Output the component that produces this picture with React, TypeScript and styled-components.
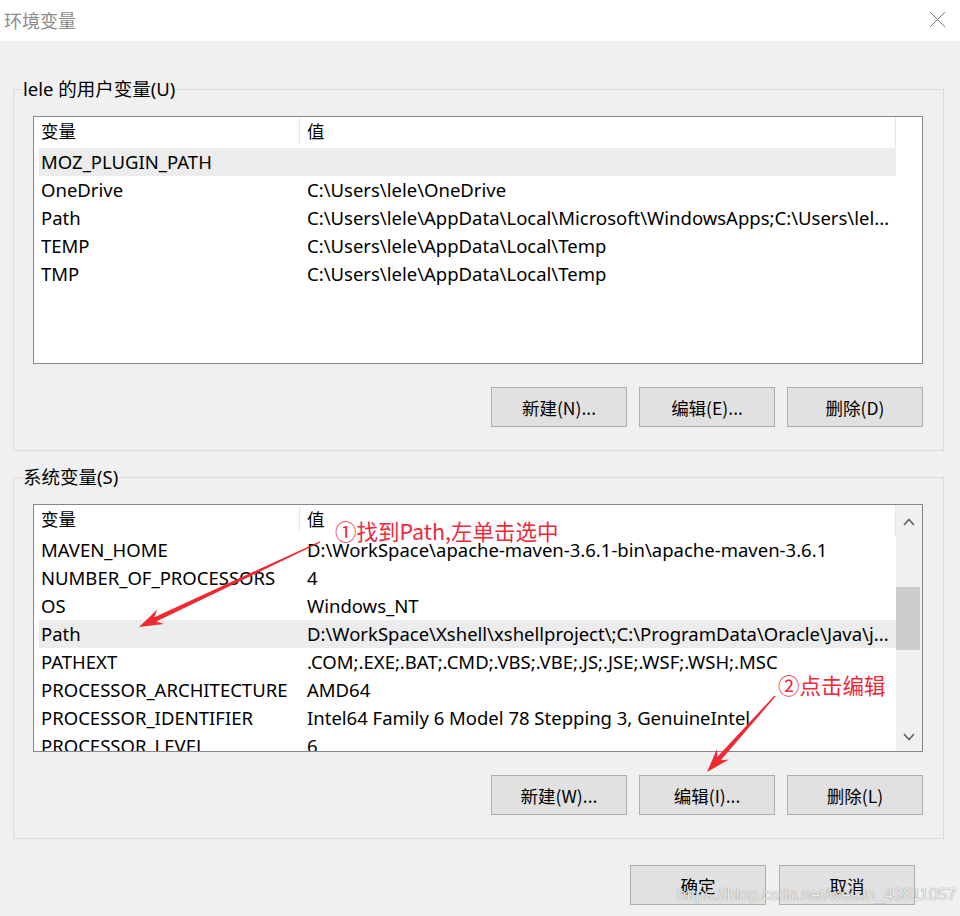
import React from "react";
import styled, { createGlobalStyle } from "styled-components";

const GlobalStyle = createGlobalStyle`
  html, body { margin: 0; padding: 0; background: #f0f0f0; }
  * { box-sizing: border-box; }
`;

const UI_FONT = `"Noto Sans", "Noto Sans CJK SC", sans-serif`;
const CJK_FONT = `"Noto Sans CJK SC", "Noto Sans", sans-serif`;

const Window = styled.div`
  position: relative;
  width: 960px;
  height: 916px;
  background: #f0f0f0;
  display: flex;
  flex-direction: column;
  overflow: hidden;
  font-family: ${UI_FONT};
  color: #000;
`;

const TitleBar = styled.div`
  height: 41px;
  flex: none;
  background: #fff;
  display: flex;
  align-items: center;
  justify-content: space-between;
  padding: 0 14px 2px 4px;
`;

const Title = styled.span`
  font-family: ${CJK_FONT};
  font-size: 18px;
  color: #8a8a8a;
`;

const CloseButton = styled.span`
  display: flex;
  width: 17px;
  height: 17px;
`;

const Body = styled.div`
  padding: 48px 16px 0 13px;
  display: flex;
  flex-direction: column;
  gap: 26px;
`;

const Group = styled.section`
  position: relative;
  border: 1px solid #dcdcdc;
  padding: 26px 19px 23px 19px;
  display: flex;
  flex-direction: column;
  gap: 23px;
`;

const Legend = styled.span`
  position: absolute;
  left: 8px;
  top: -13px;
  padding: 0 1px;
  background: #f0f0f0;
  font-size: 18.5px;
  line-height: 24px;
`;

const ListBox = styled.div`
  width: 890px;
  height: 248px;
  border: 1px solid #828790;
  background: #fff;
  display: flex;
  overflow: hidden;
`;

const ListContent = styled.div`
  width: 862px;
  margin-left: 5px;
  display: flex;
  flex-direction: column;
  overflow: hidden;
`;

const Spacer = styled.div`
  width: 26px;
  flex: none;
`;

const HeaderRow = styled.div`
  display: grid;
  grid-template-columns: 261px 1fr;
  height: 31px;
  flex: none;
  border-right: 1px solid #e5e5e5;
`;

const HeaderCell = styled.div<{ $first?: boolean }>`
  padding-left: ${(p) => (p.$first ? "2px" : "7px")};
  font-family: ${CJK_FONT};
  font-size: 17.5px;
  border-right: ${(p) => (p.$first ? "1px solid #e5e5e5" : "none")};
  margin: 1px 0 4px;
  line-height: 26px;
`;

const Row = styled.div<{ $selected?: boolean }>`
  display: grid;
  grid-template-columns: 261px 1fr;
  height: 28px;
  flex: none;
  background: ${(p) => (p.$selected ? "#ececec" : "transparent")};
  font-size: 18.5px;
  line-height: 28px;
  white-space: nowrap;
`;

const Cell = styled.div<{ $value?: boolean }>`
  padding-left: ${(p) => (p.$value ? "7px" : "2px")};
  overflow: hidden;
`;

const ScrollBar = styled.div`
  width: 26px;
  flex: none;
  background: #f0f0f0;
  display: flex;
  flex-direction: column;
`;

const ScrollArrow = styled.div<{ $h: number }>`
  height: ${(p) => p.$h}px;
  flex: none;
  display: flex;
  align-items: center;
  justify-content: center;
`;

const Track = styled.div`
  flex: 1;
`;

const Thumb = styled.div`
  margin-top: 49px;
  width: 24px;
  height: 63px;
  background: #cdcdcd;
`;

const ButtonRow = styled.div`
  display: flex;
  justify-content: flex-end;
  gap: 12px;
  padding-right: 1px;
`;

const Button = styled.button`
  width: 136px;
  height: 40px;
  background: #e1e1e1;
  border: 1px solid #adadad;
  border-radius: 0;
  font-family: ${CJK_FONT};
  font-size: 17.5px;
  color: #000;
  padding: 0;
  display: flex;
  align-items: center;
  justify-content: center;
`;

const Footer = styled.div`
  margin-top: 26px;
  display: flex;
  justify-content: flex-end;
  gap: 13px;
  padding-right: 45px;
`;

const Overlay = styled.svg`
  position: absolute;
  left: 0;
  top: 0;
  pointer-events: none;
`;

const Note = styled.span<{ $x: number; $y: number }>`
  position: absolute;
  left: ${(p) => p.$x}px;
  top: ${(p) => p.$y}px;
  font-family: ${CJK_FONT};
  font-size: 21.5px;
  line-height: 26px;
  color: #f0283a;
  white-space: nowrap;
`;

const Watermark = styled.span`
  position: absolute;
  left: 677px;
  top: 884px;
  font-family: "Liberation Sans", Arial, sans-serif;
  font-size: 16.5px;
  line-height: 20px;
  color: rgba(255, 255, 255, 0.85);
  text-shadow: 0 0 1px rgba(90, 90, 90, 0.55), 0 0 1px rgba(90, 90, 90, 0.4);
  white-space: nowrap;
`;

type Variable = { name: string; value: string; selected?: boolean };

const userVars: Variable[] = [
  { name: "MOZ_PLUGIN_PATH", value: "", selected: true },
  { name: "OneDrive", value: String.raw`C:\Users\lele\OneDrive` },
  { name: "Path", value: String.raw`C:\Users\lele\AppData\Local\Microsoft\WindowsApps;C:\Users\lel...` },
  { name: "TEMP", value: String.raw`C:\Users\lele\AppData\Local\Temp` },
  { name: "TMP", value: String.raw`C:\Users\lele\AppData\Local\Temp` },
];

const systemVars: Variable[] = [
  { name: "MAVEN_HOME", value: String.raw`D:\WorkSpace\apache-maven-3.6.1-bin\apache-maven-3.6.1` },
  { name: "NUMBER_OF_PROCESSORS", value: "4" },
  { name: "OS", value: "Windows_NT" },
  { name: "Path", value: String.raw`D:\WorkSpace\Xshell\xshellproject\;C:\ProgramData\Oracle\Java\j...`, selected: true },
  { name: "PATHEXT", value: ".COM;.EXE;.BAT;.CMD;.VBS;.VBE;.JS;.JSE;.WSF;.WSH;.MSC" },
  { name: "PROCESSOR_ARCHITECTURE", value: "AMD64" },
  { name: "PROCESSOR_IDENTIFIER", value: "Intel64 Family 6 Model 78 Stepping 3, GenuineIntel" },
  { name: "PROCESSOR_LEVEL", value: "6" },
];

function VarList({ rows, scroll }: { rows: Variable[]; scroll?: boolean }) {
  return (
    <ListBox>
      <ListContent>
        <HeaderRow>
          <HeaderCell $first>变量</HeaderCell>
          <HeaderCell>值</HeaderCell>
        </HeaderRow>
        {rows.map((r) => (
          <Row key={r.name} $selected={r.selected}>
            <Cell>{r.name}</Cell>
            <Cell $value>{r.value}</Cell>
          </Row>
        ))}
      </ListContent>
      {scroll ? (
        <ScrollBar>
          <ScrollArrow $h={33}>
            <svg width="12" height="8" viewBox="0 0 12 8">
              <path d="M1 7 L6 1.5 L11 7" fill="none" stroke="#606060" strokeWidth="1.6" />
            </svg>
          </ScrollArrow>
          <Track>
            <Thumb />
          </Track>
          <ScrollArrow $h={28}>
            <svg width="12" height="8" viewBox="0 0 12 8">
              <path d="M1 1 L6 6.5 L11 1" fill="none" stroke="#606060" strokeWidth="1.6" />
            </svg>
          </ScrollArrow>
        </ScrollBar>
      ) : (
        <Spacer />
      )}
    </ListBox>
  );
}

function arrowPoints(x1: number, y1: number, x2: number, y2: number): string {
  const dx = x2 - x1;
  const dy = y2 - y1;
  const L = Math.hypot(dx, dy);
  const ux = dx / L;
  const uy = dy / L;
  const px = -uy;
  const py = ux;
  const headLen = 24;
  const headW = 8;
  const notch = 18;
  const w0 = 0.7;
  const w1 = 2.4;
  const bx = x2 - ux * headLen;
  const by = y2 - uy * headLen;
  const nx = x2 - ux * notch;
  const ny = y2 - uy * notch;
  const pts: [number, number][] = [
    [x2, y2],
    [bx + px * headW, by + py * headW],
    [nx + px * w1, ny + py * w1],
    [x1 + px * w0, y1 + py * w0],
    [x1 - px * w0, y1 - py * w0],
    [nx - px * w1, ny - py * w1],
    [bx - px * headW, by - py * headW],
  ];
  return pts.map(([a, b]) => `${a.toFixed(1)},${b.toFixed(1)}`).join(" ");
}

export default function App() {
  return (
    <>
      <GlobalStyle />
      <Window>
        <TitleBar>
          <Title>环境变量</Title>
          <CloseButton>
            <svg width="17" height="17" viewBox="0 0 17 17">
              <path d="M1 1 L16 16 M16 1 L1 16" stroke="#7a7a7a" strokeWidth="1" fill="none" />
            </svg>
          </CloseButton>
        </TitleBar>
        <Body>
          <Group>
            <Legend>lele 的用户变量(U)</Legend>
            <VarList rows={userVars} />
            <ButtonRow>
              <Button>新建(N)...</Button>
              <Button>编辑(E)...</Button>
              <Button>删除(D)</Button>
            </ButtonRow>
          </Group>
          <Group>
            <Legend>系统变量(S)</Legend>
            <VarList rows={systemVars} scroll />
            <ButtonRow>
              <Button>新建(W)...</Button>
              <Button>编辑(I)...</Button>
              <Button>删除(L)</Button>
            </ButtonRow>
          </Group>
        </Body>
        <Footer>
          <Button>确定</Button>
          <Button>取消</Button>
        </Footer>

        <Overlay width="960" height="916" viewBox="0 0 960 916">
          <polygon points={arrowPoints(320, 542, 139, 627)} fill="#ee2a33" />
          <polygon points={arrowPoints(775, 696, 707, 772)} fill="#ee2a33" />
        </Overlay>
        <Note $x={335} $y={518}>①找到Path,左单击选中</Note>
        <Note $x={778} $y={672}>②点击编辑</Note>
        <Watermark>https://blog.csdn.net/weixin_43811057</Watermark>
      </Window>
    </>
  );
}
